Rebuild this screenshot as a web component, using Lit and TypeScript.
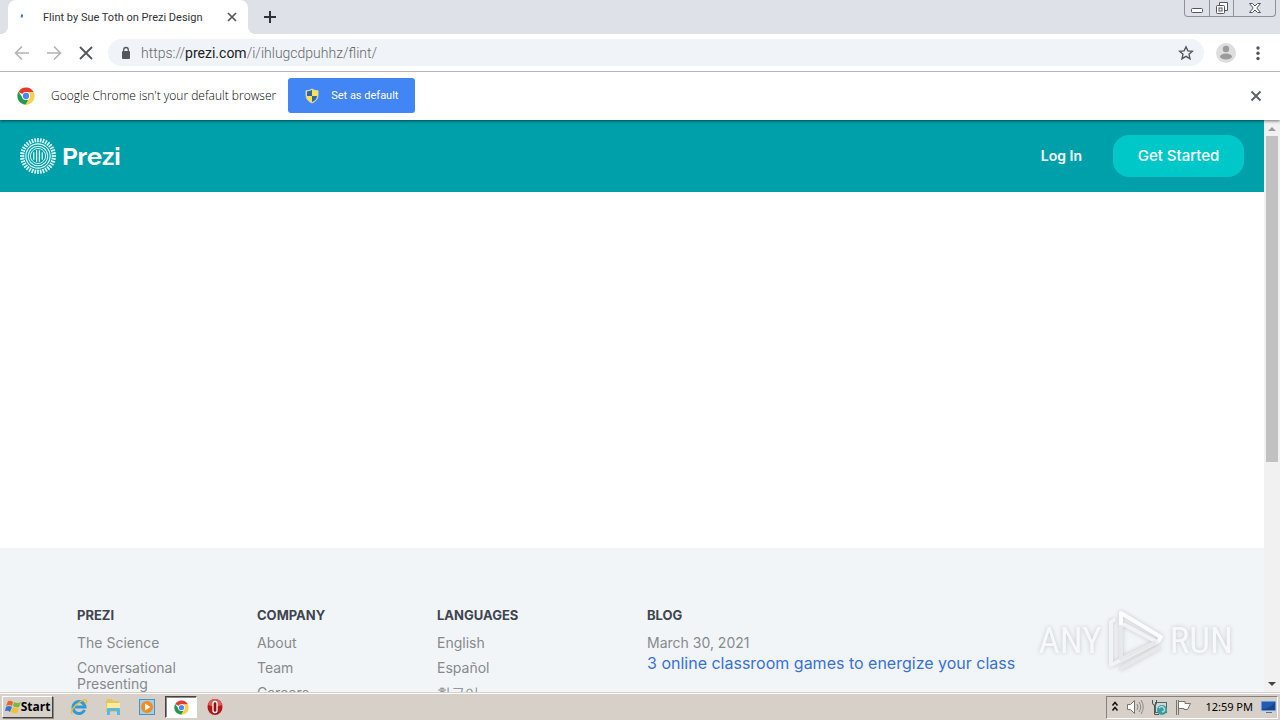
import { LitElement, html, css, svg } from "lit";
import { customElement } from "lit/decorators.js";

const chromeLogo = html`<svg class="logo" viewBox="0 0 24 24" aria-hidden="true">
  <path fill="#e33b2e" d="M12 12 2 6.5A11.500 11.500 0 0 1 22.300 7H12z" />
  <path fill="#fcd04b" d="M12 7h10.300A11.500 11.500 0 0 1 11.500 23.500L16.500 14.500z" />
  <path fill="#27994f" d="M2 6.200 7.600 14.500 12 17h3L11.500 23.500A11.500 11.500 0 0 1 2 6.200z" />
  <circle cx="12" cy="12" r="5.400" fill="#fff" /><circle cx="12" cy="12" r="4.200" fill="#4a8af4" />
</svg>`;

const rays = Array.from({ length: 36 }, (_, i) => svg`<path d="M20 1v4.500" transform="rotate(${i * 10} 20 20)" />`);

const columns = [
  { title: "PREZI", links: ["The Science", "Conversational Presenting"] },
  { title: "COMPANY", links: ["About", "Team", "Careers"] },
  { title: "LANGUAGES", links: ["English", "Español", "한국어"] },
];

@customElement("browser-chrome")
class BrowserChrome extends LitElement {
  static styles = css`
    :host { display: block; font-family: Roboto, sans-serif; color: #303236; position: relative; z-index: 1; box-shadow: 0 1px 3px rgba(0,0,0,.55); }
    button { border: 0; background: none; padding: 0; font: inherit; color: inherit; display: flex; align-items: center; justify-content: center; }
    svg { display: block; flex: none; }
    .tabs { height: 34px; background: #dee1e8; display: flex; align-items: center; padding-left: 8px; }
    .tab { align-self: stretch; width: 240px; box-sizing: border-box; background: #fff; border-radius: 8px 8px 0 0; display: flex; align-items: center; padding: 0 10px 0 12px; gap: 11px; font-size: 11px; position: relative; }
    .tab::before, .tab::after { content: ""; position: absolute; bottom: 0; width: 8px; height: 8px; }
    .tab::before { right: 100%; background: radial-gradient(circle at 0 0, transparent 8px, #fff 8px); }
    .tab::after { left: 100%; background: radial-gradient(circle at 100% 0, transparent 8px, #fff 8px); }
    .title { flex: 1; white-space: nowrap; }
    .new { margin-left: 14px; }
    .window { margin-left: auto; margin-right: 4px; align-self: flex-start; display: flex; height: 17px; box-sizing: border-box; border: 1px solid #8d9199; border-top: 0; border-radius: 0 0 4px 4px; }
    .window button { width: 24px; }
    .window button + button { border-left: 1px solid #8d9199; }
    .window button:last-child { width: 42px; }
    .bar { height: 37px; background: #fff; border-bottom: 1px solid #b3b4b6; display: flex; align-items: center; padding: 0 12px; }
    .nav { display: flex; gap: 12px; margin-right: 12px; }
    .address { flex: 1; height: 27px; border-radius: 14px; background: #f0f3f7; display: flex; align-items: center; padding: 0 10px 0 12px; gap: 9px; font-size: 14px; font-weight: 300; color: #64686d; }
    .url { flex: 1; }
    .url b { font-weight: 400; color: #202124; }
    .profile { margin: 0 12px; }
    .info { height: 48px; box-sizing: border-box; background: #fff; display: flex; align-items: center; padding: 0 18px 1px 17px; font-size: 12px; }
    .info .logo { width: 18px; height: 18px; margin-right: 16px; }
    .info p { margin: 0 12px 0 0; white-space: nowrap; font-family: "Open Sans", sans-serif; font-weight: 300; color: #000; }
    .info .set { background: #4285f4; color: #fff; border-radius: 3px; height: 35px; padding: 0 17px; gap: 12px; font-size: 11px; white-space: nowrap; }
    .dismiss { margin-left: auto; }
  `;
  render() {
    return html`
      <div class="tabs">
        <div class="tab">
          <svg width="12" height="16" viewBox="0 0 12 16"><path d="M2.500 5.500q-1 1-.8 3" fill="none" stroke="#3976c5" stroke-width="2" /></svg>
          <span class="title">Flint by Sue Toth on Prezi Design</span>
          <button aria-label="Close tab"><svg width="12" height="12" viewBox="0 0 12 12"><path d="m2 2 8 8m0-8-8 8" stroke="#56595e" stroke-width="1.700" /></svg></button>
        </div>
        <button class="new" aria-label="New tab"><svg width="16" height="16" viewBox="0 0 16 16"><path d="M8 2v12M2 8h12" stroke="#303236" stroke-width="2" /></svg></button>
        <div class="window">
          <button aria-label="Minimize"><svg width="14" height="16" viewBox="0 0 14 16"><rect x="1.500" y="8.500" width="11" height="4" rx="1" fill="#fff" stroke="#53565d" /></svg></button>
          <button aria-label="Restore"><svg width="14" height="16" viewBox="0 0 14 16"><path d="M4.500 5.500v-3h8v8h-3" fill="#fff" stroke="#53565d" /><rect x="1.500" y="5.500" width="8" height="8" rx="1" fill="#fff" stroke="#53565d" /><rect x="4" y="8" width="3" height="3" fill="none" stroke="#53565d" /></svg></button>
          <button aria-label="Close"><svg width="14" height="16" viewBox="0 0 14 16"><path d="M1.500 3.500h3L7 6l2.500-2.500h3L8.800 8l3.700 4.500h-3L7 10l-2.500 2.500h-3L5.200 8z" fill="#fff" stroke="#53565d" /></svg></button>
        </div>
      </div>
      <div class="bar">
        <div class="nav">
          <button aria-label="Back"><svg width="20" height="20" viewBox="0 0 20 20"><path d="M17 10H4m6-6.500L3.500 10l6.500 6.500" fill="none" stroke="#b2b4b7" stroke-width="1.600" /></svg></button>
          <button aria-label="Forward"><svg width="20" height="20" viewBox="0 0 20 20"><path d="M3 10h13m-6-6.500 6.500 6.500-6.500 6.500" fill="none" stroke="#b2b4b7" stroke-width="1.600" /></svg></button>
          <button aria-label="Stop"><svg width="20" height="20" viewBox="0 0 20 20"><path d="m4 4 12 12m0-12L4 16" stroke="#54575b" stroke-width="1.800" /></svg></button>
        </div>
        <div class="address">
          <svg width="12" height="14" viewBox="0 0 12 14"><rect x="2" y="5" width="8" height="8" rx="1" fill="#54575b" /><path d="M3.700 6V3.800a2.300 2.300 0 0 1 4.600 0V6" fill="none" stroke="#54575b" stroke-width="1.300" /></svg>
          <span class="url">https://<b>prezi.com</b>/i/ihlugcdpuhhz/flint/</span>
          <button aria-label="Bookmark"><svg width="16" height="16" viewBox="0 0 16 16"><path d="m8 1.800 1.900 4.100 4.500.4-3.400 3 1 4.400L8 11.300l-4 2.400 1-4.400-3.400-3 4.500-.4z" fill="none" stroke="#54575b" stroke-width="1.400" /></svg></button>
        </div>
        <button class="profile" aria-label="Profile"><svg width="20" height="20" viewBox="0 0 20 20"><circle cx="10" cy="10" r="10" fill="#dedede" /><circle cx="10" cy="6" r="3.200" fill="#9b9b9b" /><ellipse cx="10" cy="13.500" rx="6" ry="3" fill="#9b9b9b" /></svg></button>
        <button aria-label="Menu"><svg width="20" height="20" viewBox="0 0 20 20" fill="#54575b"><circle cx="10" cy="5" r="1.700" /><circle cx="10" cy="10.300" r="1.700" /><circle cx="10" cy="15.500" r="1.700" /></svg></button>
      </div>
      <div class="info">
        ${chromeLogo}<p>Google Chrome isn't your default browser</p>
        <button class="set"><svg width="14" height="16" viewBox="0 0 14 16"><path d="M7 1Q4 3 1 2.700V7q0 5.500 6 8 6-2.500 6-8V2.700Q10 3 7 1z" fill="#ffe14a" stroke="#cfd3c6" /><path d="M7 2Q4.500 3.400 2 3.500V8h5zM7 8h5q-.4 4.300-5 6z" fill="#2d67aa" /></svg>Set as default</button>
        <button class="dismiss" aria-label="Dismiss"><svg width="12" height="12" viewBox="0 0 12 12"><path d="m1.500 1.500 9 9m0-9-9 9" stroke="#5f6368" stroke-width="2" /></svg></button>
      </div>`;
  }
}

@customElement("site-page")
class SitePage extends LitElement {
  static styles = css`
    :host { flex: 1; min-height: 0; display: flex; background: #fff; font-family: Inter, sans-serif; position: relative; }
    a { text-decoration: none; color: inherit; }
    .page { flex: 1; overflow: hidden; display: flex; flex-direction: column; }
    header { height: 72px; flex: none; background: #00a0ab; color: #fff; display: flex; align-items: center; padding: 0 20px; }
    .brand { display: flex; align-items: center; gap: 6px; font: 700 25px/36px Raleway, Lato, sans-serif; }
    .brand svg { width: 36px; height: 36px; fill: none; stroke: #e7ffff; }
    .login { margin-left: auto; font-size: 14px; line-height: 18px; font-weight: 600; }
    .start { margin-left: 31px; width: 131px; height: 42px; padding: 0; border: 0; border-radius: 16px; background: #00c8c8; color: #fff; font: 500 15px/20px Inter, sans-serif; }
    main { flex: 1; }
    footer { height: 145px; flex: none; overflow: hidden; box-sizing: border-box; background: #f2f5f8; padding: 59px 0 0 77px; display: grid; grid-template-columns: 180px 180px 210px 1fr; color: #86898c; font-size: 14px; line-height: 16px; }
    h2 { margin: 0 0 12px; font-size: 13px; line-height: 16px; font-weight: 700; color: #40444f; }
    ul { list-style: none; margin: 0; padding: 0; width: 120px; }
    li { margin-bottom: 9px; }
    p { margin: 0; }
    .post { color: #3871da; font-size: 16px; line-height: 24px; }
    .scroll { width: 16px; background: #f1f1f1; display: flex; flex-direction: column; align-items: center; padding-top: 1px; box-sizing: border-box; }
    .scroll svg { flex: none; }
    .thumb { width: 12px; height: 57%; background: #c1c1c1; }
    .down { margin-top: auto; }
    .mark { position: absolute; right: 47px; bottom: 20px; display: flex; align-items: center; gap: 5px; font: 400 37px/64px "Roboto Condensed", "Liberation Sans Narrow", Roboto, sans-serif; color: #f6f8f9; filter: drop-shadow(0 0 2px #c4c7ca); }
  `;
  render() {
    return html`
      <div class="page">
        <header>
          <a class="brand" href="#"><svg viewBox="1 1 38 38"><g stroke-width="1.700">${rays}</g><circle cx="20" cy="20" r="12.800" stroke-width="1.200" /><circle cx="20" cy="20" r="10.300" stroke-width="1.100" /><circle cx="20" cy="20" r="8" stroke-width="1" /><path stroke-width="1.300" d="M15.500 16v8M18.500 14v12M21.500 14v12M24.500 16v8" /></svg>Prezi</a>
          <a class="login" href="#">Log In</a>
          <button class="start">Get Started</button>
        </header>
        <main></main>
        <footer>
          ${columns.map((c) => html`<section><h2>${c.title}</h2><ul>${c.links.map((l) => html`<li><a href="#">${l}</a></li>`)}</ul></section>`)}
          <section><h2>BLOG</h2><p>March 30, 2021</p><a class="post" href="#">3 online classroom games to energize your class</a></section>
        </footer>
      </div>
      <div class="scroll">
        <svg width="16" height="15" viewBox="0 0 16 15"><path d="m4 10 4-4 4 4z" fill="#9a9a9a" /></svg>
        <div class="thumb"></div>
        <svg class="down" width="16" height="16" viewBox="0 0 16 16"><path d="m4 5 4 4 4-4z" fill="#454545" /></svg>
      </div>
      <div class="mark"><span>ANY</span>
        <svg width="58" height="64" viewBox="0 0 58 64" fill="none" stroke-width="4" stroke-linejoin="round">
          <path d="M14 50V4l40 24-3 5" stroke="#fbfcfd" /><path d="M8 10 4 13v43l46-23-34-18" stroke="#f1f3f5" /><path d="M14 16v34l35-17M13 60l40-22" stroke="#e6e8ea" />
        </svg><span>RUN</span></div>`;
  }
}

@customElement("task-bar")
class TaskBar extends LitElement {
  static styles = css`
    :host { display: flex; align-items: center; height: 26px; border-top: 1px solid #fff; background: #d6d0c8; padding: 0 2px; font-family: "Noto Sans", sans-serif; color: #000; box-shadow: 0 -1px #d6d0c8; position: relative; z-index: 1; }
    button { border: 0; padding: 0; background: none; display: flex; align-items: center; justify-content: center; }
    svg { display: block; flex: none; }
    .start { width: 51px; height: 22px; box-sizing: border-box; border: 1px solid; border-color: #fff #45433f #45433f #fff; box-shadow: 1px 1px #8d8984; font: 700 12px/16px "Open Sans", sans-serif; }
    .apps { display: flex; margin-left: 10px; gap: 2px; }
    .apps button { width: 32px; height: 22px; box-sizing: border-box; }
    .apps .active { background: #fff; border: 1px solid; border-color: #45433f #fff #fff #45433f; box-shadow: inset 1px 1px #8d8984; }
    .logo { width: 15px; height: 15px; }
    .tray { margin-left: auto; height: 21px; display: flex; align-items: center; border: 1px solid; border-color: #85817b #fff #fff #85817b; padding-left: 4px; gap: 7px; font-size: 11px; line-height: 14px; white-space: nowrap; }
    .clock { margin-left: 6px; }
  `;
  render() {
    return html`
      <button class="start"><svg width="16" height="16" viewBox="0 0 16 16"><path d="M3 2q3-1 5 1L7 7Q4 5 1 7z" fill="#e8642c" /><path d="M9 3q3 2 7 0l-2 5q-3 1-6-1z" fill="#79b83e" /><path d="M1 8q3-2 6 0l-2 5q-2-2-5-1z" fill="#3975cf" /><path d="M8 8q3 2 6 1l-2 5q-3 1-6-1z" fill="#f5c02f" /></svg>Start</button>
      <div class="apps">
        <button aria-label="Internet Explorer"><svg width="18" height="18" viewBox="0 0 18 18"><path d="M14.500 12A6 6 0 1 1 15 9H5" fill="none" stroke="#3299d8" stroke-width="3" /><path d="M2 16q-2-3 4-9 7-6 10-5 2 2-1 4" fill="none" stroke="#eebc32" stroke-width="1.300" /></svg></button>
        <button aria-label="Explorer"><svg width="18" height="18" viewBox="0 0 18 18"><path d="M2 3q0-2 2-2h4l1 2h6v11H2z" fill="#e5c65c" /><path d="M3 5h13v6H3z" fill="#fbeb9b" /><path d="M3 17v-6q0-1 1-1h11q1 0 1 1v6h-3v-4H6v4z" fill="#5bb8e6" /></svg></button>
        <button aria-label="Media Player"><svg width="18" height="18" viewBox="0 0 18 18"><rect x="1.500" y="1.500" width="15" height="15" fill="#9fd0f0" stroke="#4b91c9" /><circle cx="9" cy="9" r="6" fill="#f48b1c" /><path d="m7 5.500 5.500 3.500L7 12.500z" fill="#fff" /></svg></button>
        <button class="active" aria-label="Chrome">${chromeLogo}</button>
        <button aria-label="Opera"><svg width="18" height="18" viewBox="0 0 18 18"><ellipse cx="9" cy="9" rx="7.500" ry="8" fill="#b5161a" /><path d="M2 7q1-6 7-6t7 6q-7 3-14 0" fill="#dc5c56" /><rect x="7" y="3.500" width="4" height="11" rx="2" fill="#8c0f13" stroke="#fff" stroke-width="1.300" /></svg></button>
      </div>
      <div class="tray">
        <svg width="8" height="14" viewBox="0 0 8 14"><path d="m1.500 5.500 2.500-3 2.500 3m-5 5 2.500-3 2.500 3" fill="none" stroke="#111" stroke-width="1.500" /></svg>
        <svg width="18" height="16" viewBox="0 0 18 16"><path d="M1.500 5.500h3l4-4v13l-4-4h-3z" fill="#fff" stroke="#75736f" /><path d="M11 5q2 3 0 6m2-8q3.500 5 0 10m2-12q4.500 7 0 14" fill="none" stroke="#8b8985" /></svg>
        <svg width="17" height="17" viewBox="0 0 17 17"><rect x="4.500" y="3.500" width="11" height="10" fill="#c8d7da" stroke="#55656a" /><path d="M1.500 1v3q0 2 2 2t2-2V1M3.500 6v9.500H8" fill="none" stroke="#4f5355" /><circle cx="11" cy="11" r="5" fill="#3c9b9f" /><path d="M8 9q3-3 5 0t-2 4" fill="none" stroke="#a9dfd6" stroke-width="1.500" /></svg>
        <svg width="17" height="17" viewBox="0 0 17 17"><path d="M1.500 1v15M3.500 1v15" stroke="#77756f" /><path d="M3.500 2.500H10v2h5.500l-3 6H9v-1H3.500z" fill="#fff" stroke="#77756f" /></svg>
        <span class="clock">12:59 PM</span>
        <svg width="17" height="15" viewBox="0 0 17 15"><path d="M1 1h15v10H1z" fill="#225bb2" stroke="#b9d0ef" /><path d="M2 9q8 0 13-7v8H2z" fill="#1a458c" /><path d="M6 12h6v1H6z" fill="#5e6c80" /></svg>
      </div>`;
  }
}

@customElement("app-root")
class AppRoot extends LitElement {
  static styles = css`:host { display: flex; flex-direction: column; height: 100vh; overflow: hidden; background: #fff; }`;
  render() {
    return html`<browser-chrome></browser-chrome><site-page></site-page><task-bar></task-bar>`;
  }
}
